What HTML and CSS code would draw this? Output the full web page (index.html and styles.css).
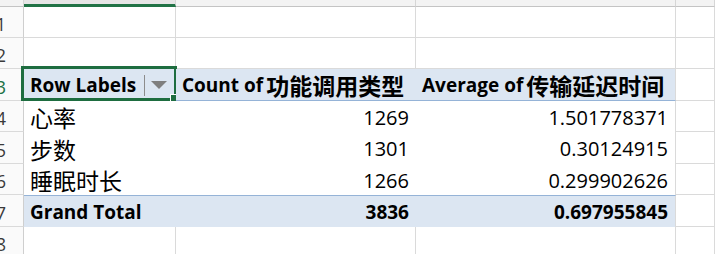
FILE: index.html
```html
<!DOCTYPE html>
<html>
<head>
<meta charset="utf-8">
<link rel="stylesheet" href="styles.css">
</head>
<body>
<div class="sheet">
  <div class="colhead corner"></div>
  <div class="colhead selcol"></div>
  <div class="colhead"></div>
  <div class="colhead"></div>
  <div class="colhead"></div>

  <div class="rowhead">1</div>
  <div class="cell"></div><div class="cell"></div><div class="cell"></div><div class="cell"></div>

  <div class="rowhead">2</div>
  <div class="cell"></div><div class="cell"></div><div class="cell"></div><div class="cell"></div>

  <div class="rowhead active">3</div>
  <div class="cell pv hd sel">
    <span class="lbl">Row Labels</span>
    <span class="dd"><span class="tri"></span></span>
    <span class="selbox"></span>
    <span class="handle"></span>
  </div>
  <div class="cell pv hd">Count of<span class="zh">功能调用类型</span></div>
  <div class="cell pv hd colc">Average of<span class="zh">传输延迟时间</span></div>
  <div class="cell"></div>

  <div class="rowhead">4</div>
  <div class="cell pv"><span class="zh">心率</span></div>
  <div class="cell pv num">1269</div>
  <div class="cell pv num colc">1.501778371</div>
  <div class="cell"></div>

  <div class="rowhead">5</div>
  <div class="cell pv"><span class="zh">步数</span></div>
  <div class="cell pv num">1301</div>
  <div class="cell pv num colc">0.30124915</div>
  <div class="cell"></div>

  <div class="rowhead">6</div>
  <div class="cell pv"><span class="zh">睡眠时长</span></div>
  <div class="cell pv num">1266</div>
  <div class="cell pv num colc">0.299902626</div>
  <div class="cell"></div>

  <div class="rowhead">7</div>
  <div class="cell pv tot">Grand Total</div>
  <div class="cell pv tot num">3836</div>
  <div class="cell pv tot num colc">0.697955845</div>
  <div class="cell"></div>

  <div class="rowhead">8</div>
  <div class="cell"></div><div class="cell"></div><div class="cell"></div><div class="cell"></div>
</div>
</body>
</html>
```
FILE: styles.css
```css
html, body {
  margin: 0;
  padding: 0;
  background: #ffffff;
  overflow: hidden;
}

body {
  font-family: "Open Sans", "Noto Sans CJK SC", sans-serif;
  color: #000;
}

.sheet {
  display: grid;
  grid-template-columns: 24px 152px 240px 260px 39px;
  grid-template-rows: 7px 31px 31px 32px 31px 32px 31px 32px 31px;
  width: 715px;
}

.colhead {
  box-sizing: border-box;
  background: #f3f3f3;
  border-right: 1px solid #d6d6d6;
  border-bottom: 1px solid #c4c4c4;
}

.colhead.selcol {
  background: #e6e6e6;
  border-bottom: 3px solid #217346;
}

.rowhead {
  box-sizing: border-box;
  background: #fafafa;
  border-right: 1px solid #cfcfcf;
  border-bottom: 1px solid #dadada;
  display: flex;
  justify-content: flex-end;
  align-items: flex-end;
  padding: 0 17px 4px 0;
  font-size: 18px;
  line-height: 1;
  color: #3a3a3a;
  overflow: hidden;
}

.rowhead.active {
  color: #217346;
}

.cell {
  position: relative;
  box-sizing: border-box;
  border-right: 1px solid #dadada;
  border-bottom: 1px solid #dadada;
  display: flex;
  align-items: center;
  padding: 2px 6px 0 6px;
  white-space: nowrap;
  font-size: 20px;
  line-height: 1;
}

.pv {
  border-right: none;
  border-bottom: none;
  background: #ffffff;
}

.pv.colc {
  border-right: 1px solid #dadada;
}

.num {
  justify-content: flex-end;
  padding-right: 7px;
}

.hd {
  background: #dce6f2;
  border-bottom: 1px solid #95b3d7;
  font-weight: 700;
  font-size: 19px;
}

.tot {
  background: #dce6f2;
  border-top: 1px solid #95b3d7;
  font-weight: 700;
  font-size: 19px;
}

.zh {
  font-family: "Noto Sans CJK SC", sans-serif;
  font-size: 23px;
}

.hd .zh {
  margin-left: 3px;
}

.lbl {
  flex: none;
}

.dd {
  margin-left: auto;
  margin-right: -2px;
  width: 27px;
  height: 21px;
  border-left: 1px solid #8c8c8c;
  display: flex;
  align-items: center;
  justify-content: center;
}

.tri {
  width: 0;
  height: 0;
  border-left: 8px solid transparent;
  border-right: 8px solid transparent;
  border-top: 8px solid #7f7f7f;
  margin-top: -2px;
}

.selbox {
  position: absolute;
  left: -3px;
  top: -3px;
  right: -1px;
  bottom: -1px;
  border: 3px solid #1e6d40;
  pointer-events: none;
}

.handle {
  position: absolute;
  right: -5px;
  bottom: -5px;
  width: 9px;
  height: 9px;
  background: #1e6d40;
  border: 1px solid #ffffff;
}
```
